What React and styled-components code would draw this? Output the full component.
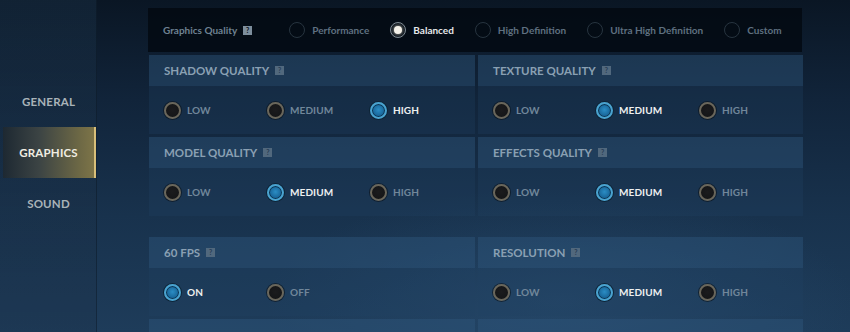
import React from "react";
import styled, { createGlobalStyle } from "styled-components";

const GlobalStyle = createGlobalStyle`
  html, body {
    margin: 0;
    padding: 0;
    background: #0c1928;
  }
  * {
    box-sizing: border-box;
  }
`;

const menu = ["GENERAL", "GRAPHICS", "SOUND"];

const presets = [
  { name: "Performance" },
  { name: "Balanced", checked: true },
  { name: "High Definition" },
  { name: "Ultra High Definition" },
  { name: "Custom" },
];

const levels = ["LOW", "MEDIUM", "HIGH"];

const rows = [
  [
    { title: "SHADOW QUALITY", options: levels, value: "HIGH" },
    { title: "TEXTURE QUALITY", options: levels, value: "MEDIUM" },
  ],
  [
    { title: "MODEL QUALITY", options: levels, value: "MEDIUM" },
    { title: "EFFECTS QUALITY", options: levels, value: "MEDIUM" },
  ],
];

const lowerRows = [
  [
    { title: "60 FPS", options: ["ON", "OFF"], value: "ON" },
    { title: "RESOLUTION", options: levels, value: "MEDIUM" },
  ],
];

const App = () => {
  return (
    <>
      <GlobalStyle />
      <Screen>
        <SideBar>
          {menu.map((item) => (
            <MenuItem key={item} active={item === "GRAPHICS"}>
              {item}
            </MenuItem>
          ))}
        </SideBar>

        <Content>
          <PresetBar>
            <PresetLabel>
              Graphics Quality <Help top>?</Help>
            </PresetLabel>
            {presets.map((p) => (
              <Preset key={p.name} checked={p.checked}>
                <TopRadio checked={p.checked} />
                <span>{p.name}</span>
              </Preset>
            ))}
          </PresetBar>

          <Grid>
            {rows.flat().map((panel) => (
              <SettingPanel key={panel.title} {...panel} />
            ))}
          </Grid>

          <Grid lower>
            {lowerRows.flat().map((panel) => (
              <SettingPanel key={panel.title} {...panel} />
            ))}
            <Panel>
              <PanelHeader />
              <PanelBody />
            </Panel>
            <Panel>
              <PanelHeader />
              <PanelBody />
            </Panel>
          </Grid>
        </Content>
      </Screen>
    </>
  );
};

const SettingPanel = ({ title, options, value }) => (
  <Panel>
    <PanelHeader>
      {title} <Help>?</Help>
    </PanelHeader>
    <PanelBody>
      {options.map((opt) => (
        <Option key={opt} checked={opt === value}>
          <Radio checked={opt === value} />
          <span>{opt}</span>
        </Option>
      ))}
    </PanelBody>
  </Panel>
);

export default App;

const Screen = styled.div`
  width: 850px;
  height: 332px;
  overflow: hidden;
  display: flex;
  font-family: Lato, "Open Sans", sans-serif;
  background:
    radial-gradient(ellipse 420px 160px at 560px 300px, rgba(52, 96, 138, 0.3), transparent 70%),
    linear-gradient(180deg, #0a1624 0%, #11243a 30%, #18324d 65%, #1e3c5a 100%);
`;

const SideBar = styled.div`
  width: 97px;
  flex-shrink: 0;
  padding-top: 76px;
  background: linear-gradient(180deg, rgba(22, 42, 62, 0.6), rgba(28, 52, 78, 0.5));
  border-right: 1px solid rgba(6, 14, 24, 0.35);
  display: flex;
  flex-direction: column;
`;

const MenuItem = styled.div`
  height: 51px;
  flex-shrink: 0;
  margin-left: 3px;
  width: 93px;
  display: flex;
  align-items: center;
  justify-content: center;
  font-size: 11.5px;
  font-weight: 700;
  letter-spacing: 0.2px;
  color: ${(props) => (props.active ? "#f0ede2" : "#a9b3b8")};
  background: ${(props) =>
    props.active
      ? "linear-gradient(90deg, rgba(30, 40, 48, 0.9) 0%, #3c4444 40%, #6e6945 85%, #7d7448 100%)"
      : "transparent"};
  border-right: ${(props) => (props.active ? "2px solid #d8bf7a" : "2px solid transparent")};
`;

const Content = styled.div`
  flex: 1;
  padding: 8px 0 0 51px;
  display: flex;
  flex-direction: column;
`;

const PresetBar = styled.div`
  width: 654px;
  height: 44px;
  flex-shrink: 0;
  padding-left: 15px;
  display: flex;
  align-items: center;
  gap: 21px;
  background: rgba(3, 9, 16, 0.8);
`;

const PresetLabel = styled.div`
  display: flex;
  align-items: center;
  white-space: nowrap;
  margin-right: 16px;
  font-size: 10px;
  font-weight: 700;
  color: #6f8292;
`;

const Preset = styled.div`
  display: flex;
  align-items: center;
  flex-shrink: 0;
  white-space: nowrap;
  gap: 7px;
  font-size: 10px;
  font-weight: 700;
  color: ${(props) => (props.checked ? "#e6e8ea" : "#5f7080")};
`;

const TopRadio = styled.span`
  width: 16px;
  height: 16px;
  border-radius: 50%;
  border: ${(props) => (props.checked ? "1.5px solid #7c8790" : "1px solid #27343f")};
  display: flex;
  align-items: center;
  justify-content: center;
  &::after {
    content: "";
    display: ${(props) => (props.checked ? "block" : "none")};
    width: 8px;
    height: 8px;
    border-radius: 50%;
    background: #f4f1e8;
    box-shadow: 0 0 4px rgba(255, 250, 230, 0.8);
  }
`;

const Help = styled.span`
  display: inline-flex;
  align-items: center;
  justify-content: center;
  width: 9px;
  height: 9px;
  margin-left: 6px;
  font-size: 7px;
  font-weight: 900;
  line-height: 1;
  color: ${(props) => (props.top ? "#0d1824" : "#2a4058")};
  background: ${(props) => (props.top ? "#7d8e9c" : "#51687d")};
`;

const Grid = styled.div`
  width: 654px;
  flex-shrink: 0;
  margin-top: ${(props) => (props.lower ? "21px" : "3px")};
  display: grid;
  grid-template-columns: 326px 325px;
  column-gap: 3px;
  row-gap: 3px;
  padding-left: 1px;
`;

const Panel = styled.div`
  display: flex;
  flex-direction: column;
`;

const PanelHeader = styled.div`
  height: 31px;
  padding-left: 15px;
  display: flex;
  align-items: center;
  font-size: 11.5px;
  font-weight: 700;
  color: #8aa0b3;
  background: rgba(46, 86, 124, 0.45);
`;

const PanelBody = styled.div`
  height: 48px;
  padding: 0 0 0 15px;
  display: flex;
  align-items: center;
  background: rgba(34, 66, 98, 0.3);
`;

const Option = styled.div`
  width: 103px;
  display: flex;
  align-items: center;
  gap: 6px;
  font-size: 10px;
  font-weight: 700;
  letter-spacing: 0.1px;
  color: ${(props) => (props.checked ? "#eef0f0" : "#71879a")};
`;

const Radio = styled.span`
  width: 17px;
  height: 17px;
  border-radius: 50%;
  flex-shrink: 0;
  border: 2px solid ${(props) => (props.checked ? "#4aa3cf" : "#6a665a")};
  background: ${(props) =>
    props.checked
      ? "radial-gradient(circle at 50% 45%, #2b8dc4 0%, #1a6a9e 55%, #0f4c75 100%)"
      : "radial-gradient(circle at 50% 45%, #1b1b1d 0%, #131416 100%)"};
  box-shadow: ${(props) =>
    props.checked
      ? "0 0 0 1px #0d2436, inset 0 0 0 1px #0c3350"
      : "0 0 0 1px rgba(10, 16, 24, 0.6)"};
`;
